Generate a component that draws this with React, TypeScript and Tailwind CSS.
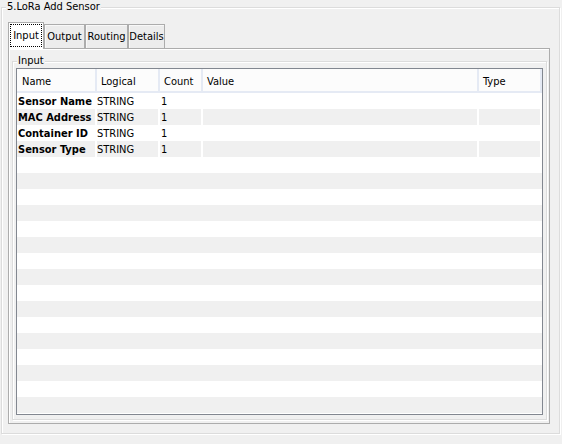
import React from 'react';

const cols = [
  { label: 'Name', w: 'w-[80px]', pl: 'pl-[5px]' },
  { label: 'Logical', w: 'w-[63px]', pl: 'pl-[4px]' },
  { label: 'Count', w: 'w-[43px]', pl: 'pl-[4px]' },
  { label: 'Value', w: 'w-[276px]', pl: 'pl-[4px]' },
  { label: 'Type', w: 'w-[63px]', pl: 'pl-[4px]' },
];

const rows = [
  { name: 'Sensor Name', logical: 'STRING', count: '1' },
  { name: 'MAC Address', logical: 'STRING', count: '1' },
  { name: 'Container ID', logical: 'STRING', count: '1' },
  { name: 'Sensor Type', logical: 'STRING', count: '1' },
];

const tabs = [
  { label: 'Output', w: 'w-[41px]' },
  { label: 'Routing', w: 'w-[43px]' },
  { label: 'Details', w: 'w-[37px]' },
];

export default function App() {
  return (
    <div className="w-[562px] h-[444px] bg-[#f0f0f0] pt-[7px] pl-[1px] pr-[2px] pb-[10px] text-[11px] text-black font-['DejaVu_Sans_Condensed','DejaVu_Sans',sans-serif] [font-stretch:condensed] overflow-hidden">
      {/* outer group box */}
      <div className="relative h-full flex flex-col border border-[#dcdcdc] shadow-[inset_1px_1px_0_#fff,1px_1px_0_#fff] pt-[14px] pl-[6px] pr-[9px] pb-[9px]">
        <span className="absolute left-[4px] top-[-8px] px-[1px] bg-[#f0f0f0] leading-[14px]">5.LoRa Add Sensor</span>

        {/* tabs */}
        <div className="flex items-end h-[26px]">
          <div className="relative z-10 w-[36px] h-[27px] -mb-px bg-white border border-b-0 border-[#acacac] px-[1px] pt-[1px] pb-[2px]">
            <div className="h-full flex items-center justify-center border border-dotted border-black leading-none whitespace-nowrap">Input</div>
          </div>
          {tabs.map((t) => (
            <div
              key={t.label}
              className={`${t.w} h-[24px] flex items-center justify-center bg-[#ececec] border border-b-0 border-[#acacac] shadow-[inset_1px_1px_0_#f8f8f8] leading-none whitespace-nowrap`}
            >
              {t.label}
            </div>
          ))}
        </div>

        {/* tab panel */}
        <div className="flex-1 flex flex-col border border-[#acacac] shadow-[inset_1px_1px_0_#fff] pt-[12px] pl-[3px] pr-[2px] pb-[3px] min-h-0">
          {/* inner group box */}
          <div className="relative flex-1 flex flex-col border border-[#dcdcdc] shadow-[inset_1px_1px_0_#fff,1px_1px_0_#fff] pt-[6px] pl-[3px] pr-[3px] pb-[4px] min-h-0">
            <span className="absolute left-[4px] top-[-8px] px-[1px] bg-[#f0f0f0] leading-[14px]">Input</span>

            {/* table */}
            <div className="flex-1 flex flex-col border border-[#828790] bg-white overflow-hidden min-h-0">
              <div className="flex h-[24px] shrink-0 bg-[#fcfcfc] border-b-2 border-[#e5eaf4]">
                {cols.map((c) => (
                  <div key={c.label} className={`${c.w} ${c.pl} shrink-0 flex items-center pt-[4px] border-r-2 border-[#e5eaf4]`}>
                    {c.label}
                  </div>
                ))}
              </div>
              {rows.map((r, i) => (
                <div key={r.name} className={`flex h-[16px] shrink-0 leading-[18px] overflow-hidden ${i % 2 ? 'bg-[#f0f0f0]' : 'bg-white'}`}>
                  <div className="w-[80px] shrink-0 pl-[1px] font-bold border-r-2 border-white whitespace-nowrap overflow-hidden">{r.name}</div>
                  <div className="w-[63px] shrink-0 border-r-2 border-white">{r.logical}</div>
                  <div className="w-[43px] shrink-0 pl-[1px] border-r-2 border-white">{r.count}</div>
                  <div className="w-[276px] shrink-0 border-r-2 border-white" />
                  <div className="w-[63px] shrink-0 border-r-2 border-white" />
                </div>
              ))}
              {Array.from({ length: 16 }).map((_, i) => (
                <div key={i} className={`h-[16px] shrink-0 ${i % 2 ? 'bg-[#f0f0f0]' : 'bg-white'}`} />
              ))}
            </div>
          </div>
        </div>
      </div>
    </div>
  );
}
